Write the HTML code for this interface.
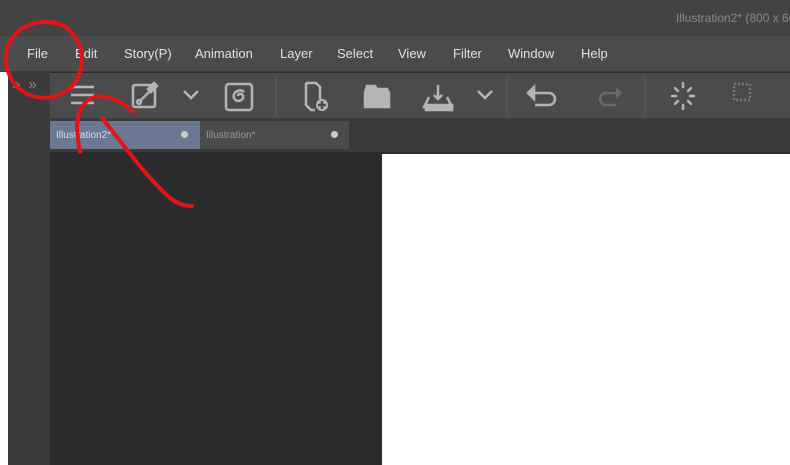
<!DOCTYPE html>
<html><head><style>
*{margin:0;padding:0;box-sizing:border-box}
body{width:790px;height:465px;overflow:hidden;background:#2c2c2c;font-family:"Liberation Sans",sans-serif;position:relative}
.a{position:absolute}
.menu span{position:absolute;top:46px;font-size:13px;color:#e2e2e2}
</style></head><body>
<div class="a" style="left:0;top:0;width:790px;height:36px;background:#434343"></div>
<div class="a" style="left:676px;top:11px;font-size:12px;color:#8a8a8a;white-space:nowrap">Illustration2* (800 x 600</div>
<div class="a" style="left:0;top:36px;width:790px;height:36px;background:#4b4b4b;border-bottom:1px solid #3a3a3a"></div>
<div class="menu">
<span style="left:27px">File</span><span style="left:75px">Edit</span><span style="left:124px">Story(P)</span><span style="left:195px">Animation</span><span style="left:280px">Layer</span><span style="left:337px">Select</span><span style="left:398px">View</span><span style="left:453px">Filter</span><span style="left:508px">Window</span><span style="left:581px">Help</span>
</div>
<div class="a" style="left:0;top:72px;width:8px;height:393px;background:#fff"></div>
<div class="a" style="left:8px;top:72px;width:42px;height:393px;background:#3b3b3b"></div>
<div class="a" style="left:12px;top:76px;font-size:15px;color:#8a8a8a;letter-spacing:2px">» »</div>
<div class="a" style="left:50px;top:73px;width:740px;height:46px;background:#4b4b4b;border-bottom:1px solid #3a3a3a"></div>
<svg class="a" style="left:50px;top:73px" width="740" height="46" fill="none" stroke="#b5b5b5" stroke-width="2.5">
<path d="M21 14h23M21 22h23M21 30h23"/>
<rect x="83" y="12" width="22" height="22" rx="2"/><path d="M90 28l10-10" /><path d="M98 16l6-6 3 3-6 6z" fill="#b5b5b5"/><circle cx="89" cy="29" r="2"/>
<path d="M134 18l7 7 7-7"/>
<rect x="176" y="11" width="26" height="26" rx="3"/><path d="M194 19c-4-4-12 0-10 6 2 5 10 3 9-2-1-3-5-3-5 0"/>
<path d="M226 4v38" stroke="#5e5e5e" stroke-width="1"/>
<path d="M256 10h10l4 4v12M256 10v22l5 5h4" /><circle cx="272" cy="32" r="6" fill="#b5b5b5" stroke="none"/><path d="M272 28v8M268 32h8" stroke="#4b4b4b"/>
<path d="M315 20v14h24v-14l-2-4h-10l-2-3h-8z" fill="#b5b5b5"/>
<path d="M379 24l-5 10h28l-5-10M388 12v14m-4-4l4 4 4-4"/><rect x="376" y="32" width="26" height="5" fill="#b5b5b5"/>
<path d="M428 18l7 7 7-7"/>
<path d="M457 4v38" stroke="#5e5e5e" stroke-width="1"/>
<path d="M485 20h14a6 6 0 010 12h-14"/><path d="M484 14v12l-6-6z" fill="#b5b5b5"/>
<path d="M566 20h-10a6 6 0 000 12h10" stroke="#6a6a6a"/><path d="M566 14v12l6-6z" fill="#6a6a6a" stroke="none"/>
<path d="M595 4v38" stroke="#5e5e5e" stroke-width="1"/>
<g stroke-linecap="round"><path d="M633 10v4M633 32v4M622 23h4M640 23h4M625 15l3 3M638 28l3 3M641 15l-3 3M628 28l-3 3"/></g>
<rect x="684" y="11" width="16" height="16" stroke="#777" stroke-dasharray="2 2"/>
</svg>
<div class="a" style="left:50px;top:119px;width:740px;height:33px;background:#3a3a3a"></div>
<div class="a" style="left:50px;top:121px;width:150px;height:28px;background:#6a7894;font-size:10px;color:#dde;padding:9px 6px">Illustration2*</div>
<div class="a" style="left:181px;top:131px;width:7px;height:7px;border-radius:50%;background:#ccc"></div>
<div class="a" style="left:200px;top:121px;width:149px;height:28px;background:#4b4b4b;font-size:10px;color:#999;padding:9px 6px">Illustration*</div>
<div class="a" style="left:331px;top:131px;width:7px;height:7px;border-radius:50%;background:#ccc"></div>
<div class="a" style="left:50px;top:152px;width:740px;height:313px;background:#2c2c2c"></div>
<div class="a" style="left:382px;top:154px;width:408px;height:311px;background:#fff"></div>
<svg class="a" style="left:0;top:0" width="790" height="465" fill="none" stroke="#e01515" stroke-width="4" stroke-linecap="round">
<path d="M58 24c-20-6-42 2-50 22-6 20 2 42 24 50 22 6 42-4 48-24 6-22-4-44-26-50"/>
<path d="M80 152c-4-20-6-40 8-52 12-8 30-2 46 12"/>
<path d="M102 118c20 25 45 60 68 80 8 6 16 8 22 8"/>
</svg>
</body></html>
